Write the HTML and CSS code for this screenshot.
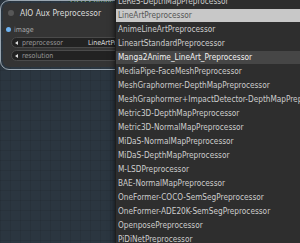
FILE: index.html
```html
<!DOCTYPE html>
<html>
<head>
<meta charset="utf-8">
<link rel="stylesheet" href="styles.css">
</head>
<body>
<div class="canvas">
  <div class="other-node"><span>Pass-Compute</span></div>
  <div class="node">
    <div class="node-title">
      <span class="title-dot"></span>
      <span class="title-text">AIO Aux Preprocessor</span>
    </div>
    <div class="node-input">
      <span class="input-dot"></span>
      <span class="input-label">image</span>
    </div>
    <div class="widget">
      <span class="arrow-left"></span>
      <span class="widget-label">preprocessor</span>
      <span class="widget-value">LineArtPreprocessor</span>
      <span class="arrow-right"></span>
    </div>
    <div class="widget">
      <span class="arrow-left"></span>
      <span class="widget-label">resolution</span>
      <span class="widget-value">512</span>
      <span class="arrow-right"></span>
    </div>
  </div>
  <div class="menu">
    <div class="menu-item">LeReS-DepthMapPreprocessor</div>
    <div class="menu-item selected">LineArtPreprocessor</div>
    <div class="menu-item">AnimeLineArtPreprocessor</div>
    <div class="menu-item">LineartStandardPreprocessor</div>
    <div class="menu-item hover">Manga2Anime_LineArt_Preprocessor</div>
    <div class="menu-item">MediaPipe-FaceMeshPreprocessor</div>
    <div class="menu-item">MeshGraphormer-DepthMapPreprocessor</div>
    <div class="menu-item">MeshGraphormer+ImpactDetector-DepthMapPreprocessor</div>
    <div class="menu-item">Metric3D-DepthMapPreprocessor</div>
    <div class="menu-item">Metric3D-NormalMapPreprocessor</div>
    <div class="menu-item">MiDaS-NormalMapPreprocessor</div>
    <div class="menu-item">MiDaS-DepthMapPreprocessor</div>
    <div class="menu-item">M-LSDPreprocessor</div>
    <div class="menu-item">BAE-NormalMapPreprocessor</div>
    <div class="menu-item">OneFormer-COCO-SemSegPreprocessor</div>
    <div class="menu-item">OneFormer-ADE20K-SemSegPreprocessor</div>
    <div class="menu-item">OpenposePreprocessor</div>
    <div class="menu-item">PiDiNetPreprocessor</div>
    <div class="menu-item">SavePoseKpsAsJsonFile</div>
  </div>
</div>
</body>
</html>
```
FILE: styles.css
```css
html, body {
  margin: 0;
  padding: 0;
  background: #2b3640;
}

.canvas {
  position: relative;
  width: 300px;
  height: 243px;
  overflow: hidden;
  background-color: #2b3640;
  background-image:
    linear-gradient(to right, rgba(0,0,0,0.08) 1px, transparent 1px),
    linear-gradient(to bottom, rgba(0,0,0,0.08) 1px, transparent 1px);
  background-size: 10px 10px;
  font-family: "DejaVu Sans Condensed", "DejaVu Sans", sans-serif;
  font-stretch: condensed;
}

.other-node {
  position: absolute;
  left: 67px;
  top: -10px;
  width: 47px;
  height: 12px;
  background: #22382a;
  border-radius: 3px;
  overflow: hidden;
  display: flex;
  align-items: flex-end;
  padding-left: 3px;
  box-sizing: border-box;
}

.other-node span {
  font-size: 8px;
  line-height: 8px;
  color: #9fb0a2;
  white-space: nowrap;
  margin-bottom: -3px;
}

.node {
  position: absolute;
  left: 3px;
  top: 3px;
  width: 166px;
  height: 64px;
  background: #343434;
  border-radius: 6px;
  outline: 1px solid #9aa6b0;
  outline-offset: 2px;
  display: flex;
  flex-direction: column;
  box-sizing: border-box;
}

.node-title {
  height: 19px;
  display: flex;
  align-items: center;
  padding-left: 5px;
  gap: 6px;
}

.title-dot {
  width: 6px;
  height: 6px;
  border-radius: 50%;
  background: #575757;
}

.title-text {
  font-size: 8.4px;
  color: #dcdcdc;
  white-space: nowrap;
}

.node-input {
  height: 15px;
  display: flex;
  align-items: center;
  padding-left: 3px;
  gap: 3px;
}

.input-dot {
  width: 5px;
  height: 5px;
  border-radius: 50%;
  background: #6db2f0;
}

.input-label {
  font-size: 7px;
  color: #a8a8a8;
}

.widget {
  height: 11px;
  margin: 0 6px 2px 8px;
  background: #222222;
  border: 1px solid #4a4a4a;
  border-radius: 6px;
  display: flex;
  align-items: center;
  box-sizing: border-box;
  padding: 0 4px 0 3px;
  font-size: 7px;
  white-space: nowrap;
}

.arrow-left {
  width: 0;
  height: 0;
  border-top: 2.5px solid transparent;
  border-bottom: 2.5px solid transparent;
  border-right: 3px solid #dddddd;
  margin-right: 4px;
}

.arrow-right {
  width: 0;
  height: 0;
  border-top: 2.5px solid transparent;
  border-bottom: 2.5px solid transparent;
  border-left: 3px solid #dddddd;
  margin-left: 4px;
}

.widget-label {
  color: #9a9a9a;
  flex: 1;
}

.widget-value {
  color: #dddddd;
}

.menu {
  position: absolute;
  left: 115px;
  top: -5px;
  width: 200px;
  background: #2e2e2e;
  border-left: 1px solid #1e1e1e;
  box-shadow: 0 0 6px rgba(0, 0, 0, 0.7);
  display: flex;
  flex-direction: column;
  gap: 1px;
}

.menu-item {
  height: 13px;
  line-height: 13px;
  padding-left: 2px;
  font-size: 8.2px;
  color: #cdcdcd;
  white-space: nowrap;
  overflow: hidden;
}

.menu-item.selected {
  background: #c8c8c8;
  color: #555555;
}

.menu-item.hover {
  background: #464646;
  color: #f2f2f2;
}
```
